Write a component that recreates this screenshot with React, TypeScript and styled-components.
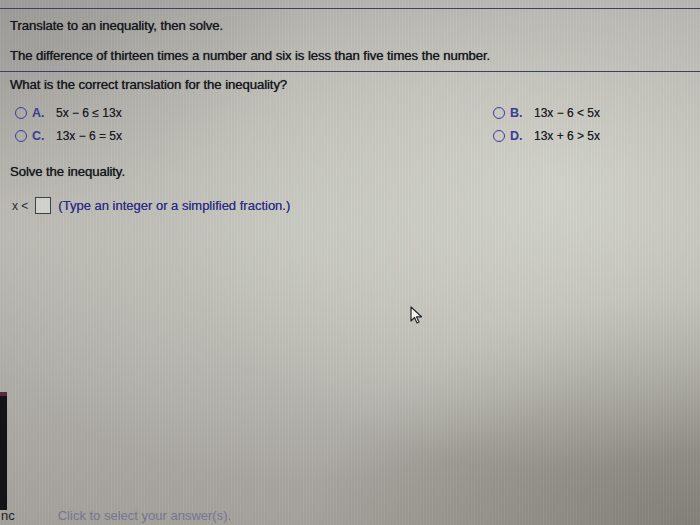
import styled, { createGlobalStyle } from "styled-components"

const GlobalStyle = createGlobalStyle`
    html, body {
        margin: 0;
        padding: 0;
        width: 700px;
        height: 525px;
        overflow: hidden;
    }
    body {
        font-family: "Liberation Sans", Arial, sans-serif;
    }
`

const Screen = styled.div`
    position: relative;
    width: 700px;
    height: 525px;
    overflow: hidden;
    display: flex;
    flex-direction: column;
    background:
        repeating-linear-gradient(90deg, rgba(255,255,255,0.025) 0 1px, rgba(0,0,0,0.02) 1px 3px),
        radial-gradient(ellipse 400px 280px at 560px 190px, rgba(212,213,205,0.9), rgba(212,213,205,0) 100%),
        radial-gradient(ellipse 360px 250px at 300px 230px, rgba(199,200,192,0.85), rgba(199,200,192,0) 100%),
        radial-gradient(ellipse 380px 230px at 690px 525px, rgba(125,124,114,0.85), rgba(125,124,114,0) 100%),
        radial-gradient(ellipse 300px 200px at 10px 10px, rgba(155,153,150,0.8), rgba(155,153,150,0) 100%),
        linear-gradient(180deg, #b0aea9 0%, #bab9b3 45%, #a5a29d 100%);
`

const Section = styled.div<{ $rule?: boolean }>`
    padding: 0 10px;
    border-top: ${p => (p.$rule ? "1.5px solid #3e4060" : "none")};
`

const Header = styled(Section)`
    margin-top: 8px;
    padding-top: 8px;
    padding-bottom: 6px;
`

const Text = styled.p<{ $gap?: number }>`
    margin: 0;
    margin-top: ${p => p.$gap ?? 0}px;
    font-size: 13.2px;
    line-height: 18px;
    color: #16161c;
    text-shadow: 0 0 0.7px rgba(20, 20, 30, 0.8);
    letter-spacing: -0.1px;
`

const Options = styled.div`
    display: grid;
    grid-template-columns: 478px 1fr;
    row-gap: 5px;
    margin-top: 10px;
    padding-left: 5px;
`

const Option = styled.label`
    display: flex;
    align-items: center;
    height: 18px;
    font-size: 12px;
    color: #1e1e26;
    text-shadow: 0 0 0.6px rgba(20, 20, 30, 0.7);
`

const Radio = styled.span`
    width: 10px;
    height: 10px;
    border: 1.8px solid #3d3c9c;
    border-radius: 50%;
    margin-right: 5px;
`

const Letter = styled.span`
    width: 24px;
    font-weight: bold;
    font-size: 12.5px;
    color: #3b3a96;
    text-shadow: none;
`

const AnswerRow = styled.div`
    display: flex;
    align-items: center;
    margin-top: 16px;
    padding-left: 2px;
    gap: 4px;
    font-size: 12px;
    color: #2a2a32;
`

const Blank = styled.span`
    width: 14px;
    height: 15px;
    border: 1px solid #3f4046;
    background: rgba(230, 231, 226, 0.5);
    margin: 0 3px 0 3px;
`

const Hint = styled.span`
    font-size: 13px;
    color: #2c2c86;
    text-shadow: 0 0 0.6px rgba(30, 30, 120, 0.7);
`

const Footer = styled.div`
    margin-top: auto;
    display: flex;
    align-items: flex-end;
    gap: 43px;
    padding-left: 1px;
    padding-bottom: 2px;
    font-size: 13px;
    line-height: 15px;
`

const Cut = styled.span`
    color: #1c1c22;
`

const FooterLink = styled.span`
    color: #6d6f90;
    opacity: 0.85;
`

const Bezel = styled.div`
    position: absolute;
    left: 0;
    top: 392px;
    width: 7px;
    height: 118px;
    background: linear-gradient(180deg, #5a2a3a 0 4px, #141418 4px 100%);
`

const Cursor = styled.svg`
    position: absolute;
    left: 410px;
    top: 306px;
`

export default function App() {
    return (
        <>
            <GlobalStyle />
            <Screen>
                <Header $rule>
                    <Text>Translate to an inequality, then solve.</Text>
                    <Text $gap={12}>The difference of thirteen times a number and six is less than five times the number.</Text>
                </Header>
                <Section $rule>
                    <Text $gap={4}>What is the correct translation for the inequality?</Text>
                    <Options>
                        <Option>
                            <Radio />
                            <Letter>A.</Letter>
                            5x − 6 ≤ 13x
                        </Option>
                        <Option>
                            <Radio />
                            <Letter>B.</Letter>
                            13x − 6 &lt; 5x
                        </Option>
                        <Option>
                            <Radio />
                            <Letter>C.</Letter>
                            13x − 6 = 5x
                        </Option>
                        <Option>
                            <Radio />
                            <Letter>D.</Letter>
                            13x + 6 &gt; 5x
                        </Option>
                    </Options>
                    <Text $gap={18}>Solve the inequality.</Text>
                    <AnswerRow>
                        <span>x &lt;</span>
                        <Blank />
                        <Hint>(Type an integer or a simplified fraction.)</Hint>
                    </AnswerRow>
                </Section>
                <Footer>
                    <Cut>nc</Cut>
                    <FooterLink>Click to select your answer(s).</FooterLink>
                </Footer>
                <Bezel />
                <Cursor width="14" height="20" viewBox="0 0 14 20">
                    <path d="M1 1 L1 15 L4.5 11.5 L7 17 L9 16 L6.5 10.8 L11.5 10.8 Z" fill="#f2f2ee" stroke="#26262a" strokeWidth="1.2" strokeLinejoin="round" />
                </Cursor>
            </Screen>
        </>
    )
}
